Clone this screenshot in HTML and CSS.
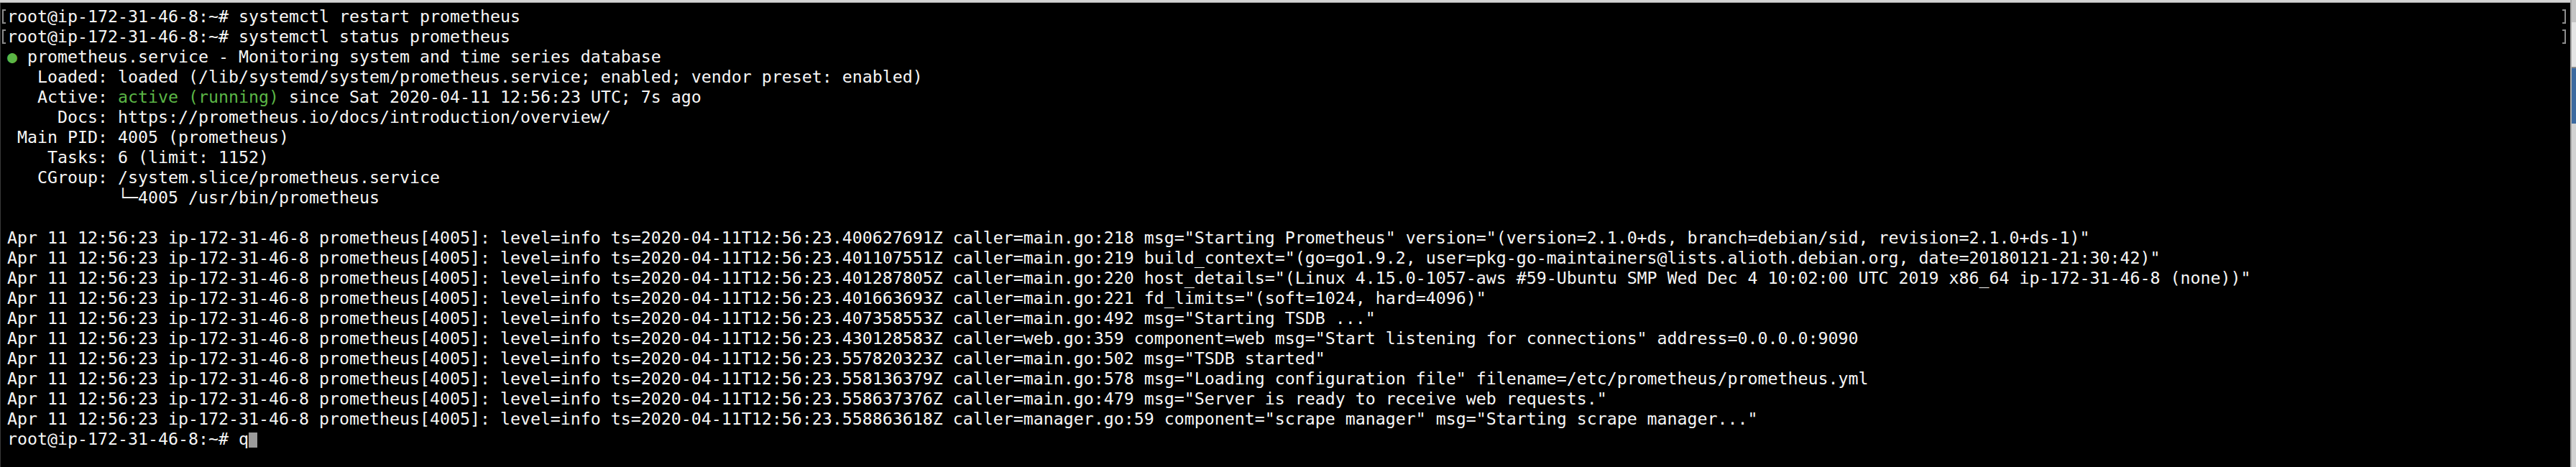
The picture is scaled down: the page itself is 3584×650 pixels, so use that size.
FILE: index.html
```html
<!DOCTYPE html>
<html>
<head>
<meta charset="utf-8">
<title>Terminal</title>
<link rel="stylesheet" href="styles.css">
</head>
<body>
<div class="window">
  <div class="topbar"></div>
  <div class="main">
    <div class="term">
      <div class="line prompt">root@ip-172-31-46-8:~# systemctl restart prometheus</div>
      <div class="line prompt">root@ip-172-31-46-8:~# systemctl status prometheus</div>
      <div class="line"><span class="green">●</span> prometheus.service - Monitoring system and time series database</div>
      <div class="line">   Loaded: loaded (/lib/systemd/system/prometheus.service; enabled; vendor preset: enabled)</div>
      <div class="line">   Active: <span class="green">active (running)</span> since Sat 2020-04-11 12:56:23 UTC; 7s ago</div>
      <div class="line">     Docs: https://prometheus.io/docs/introduction/overview/</div>
      <div class="line"> Main PID: 4005 (prometheus)</div>
      <div class="line">    Tasks: 6 (limit: 1152)</div>
      <div class="line">   CGroup: /system.slice/prometheus.service</div>
      <div class="line">           └─4005 /usr/bin/prometheus</div>
      <div class="line"> </div>
      <div class="line">Apr 11 12:56:23 ip-172-31-46-8 prometheus[4005]: level=info ts=2020-04-11T12:56:23.400627691Z caller=main.go:218 msg="Starting Prometheus" version="(version=2.1.0+ds, branch=debian/sid, revision=2.1.0+ds-1)"</div>
      <div class="line">Apr 11 12:56:23 ip-172-31-46-8 prometheus[4005]: level=info ts=2020-04-11T12:56:23.401107551Z caller=main.go:219 build_context="(go=go1.9.2, user=pkg-go-maintainers@lists.alioth.debian.org, date=20180121-21:30:42)"</div>
      <div class="line">Apr 11 12:56:23 ip-172-31-46-8 prometheus[4005]: level=info ts=2020-04-11T12:56:23.401287805Z caller=main.go:220 host_details="(Linux 4.15.0-1057-aws #59-Ubuntu SMP Wed Dec 4 10:02:00 UTC 2019 x86_64 ip-172-31-46-8 (none))"</div>
      <div class="line">Apr 11 12:56:23 ip-172-31-46-8 prometheus[4005]: level=info ts=2020-04-11T12:56:23.401663693Z caller=main.go:221 fd_limits="(soft=1024, hard=4096)"</div>
      <div class="line">Apr 11 12:56:23 ip-172-31-46-8 prometheus[4005]: level=info ts=2020-04-11T12:56:23.407358553Z caller=main.go:492 msg="Starting TSDB ..."</div>
      <div class="line">Apr 11 12:56:23 ip-172-31-46-8 prometheus[4005]: level=info ts=2020-04-11T12:56:23.430128583Z caller=web.go:359 component=web msg="Start listening for connections" address=0.0.0.0:9090</div>
      <div class="line">Apr 11 12:56:23 ip-172-31-46-8 prometheus[4005]: level=info ts=2020-04-11T12:56:23.557820323Z caller=main.go:502 msg="TSDB started"</div>
      <div class="line">Apr 11 12:56:23 ip-172-31-46-8 prometheus[4005]: level=info ts=2020-04-11T12:56:23.558136379Z caller=main.go:578 msg="Loading configuration file" filename=/etc/prometheus/prometheus.yml</div>
      <div class="line">Apr 11 12:56:23 ip-172-31-46-8 prometheus[4005]: level=info ts=2020-04-11T12:56:23.558637376Z caller=main.go:479 msg="Server is ready to receive web requests."</div>
      <div class="line">Apr 11 12:56:23 ip-172-31-46-8 prometheus[4005]: level=info ts=2020-04-11T12:56:23.558863618Z caller=manager.go:59 component="scrape manager" msg="Starting scrape manager..."</div>
      <div class="line">root@ip-172-31-46-8:~# q<span class="cursor"></span></div>
    </div>
    <div class="sidestrip"></div>
  </div>
</div>
</body>
</html>
```
FILE: styles.css
```css
html, body {
  margin: 0;
  padding: 0;
  background: #000;
}
.window {
  width: 3584px;
  height: 650px;
  display: flex;
  flex-direction: column;
  overflow: hidden;
}
.topbar {
  height: 3px;
  background: #d4d4d4;
  border-bottom: 1px solid #9a9a9a;
  margin-right: 8px;
  flex: none;
}
.main {
  flex: 1;
  display: flex;
}
.term {
  flex: 1;
  background: #000;
  border-left: 1px solid #3a3a3a;
  padding: 5px 0 0 9px;
  font-family: "DejaVu Sans Mono", monospace;
  font-size: 23.25px;
  color: #f6f6f6;
}
.line {
  position: relative;
  height: 28px;
  line-height: 28px;
  white-space: pre;
}
.prompt::before {
  content: "";
  position: absolute;
  left: -7px;
  top: 4px;
  width: 3px;
  height: 16px;
  border: 2px solid #8c8c8c;
  border-right: none;
}
.prompt::after {
  content: "";
  position: absolute;
  left: 3555px;
  top: 4px;
  width: 3px;
  height: 16px;
  border: 2px solid #8c8c8c;
  border-left: none;
}
.green {
  color: #5bb646;
}
.cursor {
  display: inline-block;
  width: 12px;
  height: 21px;
  background: #9a9a9a;
  vertical-align: -4px;
}
.sidestrip {
  width: 8px;
  flex: none;
  border-left: 2px solid #a8a8a8;
  box-sizing: border-box;
  background: linear-gradient(to bottom, #c4c4c4 0, #c4c4c4 31px, #e4e4e4 31px, #e4e4e4 93px, #8a8a8a 93px, #8a8a8a 95px, #3c6aa0 95px, #3c6aa0 172px, #d2d2d2 172px, #d2d2d2 100%);
  margin-top: -4px;
}
```
